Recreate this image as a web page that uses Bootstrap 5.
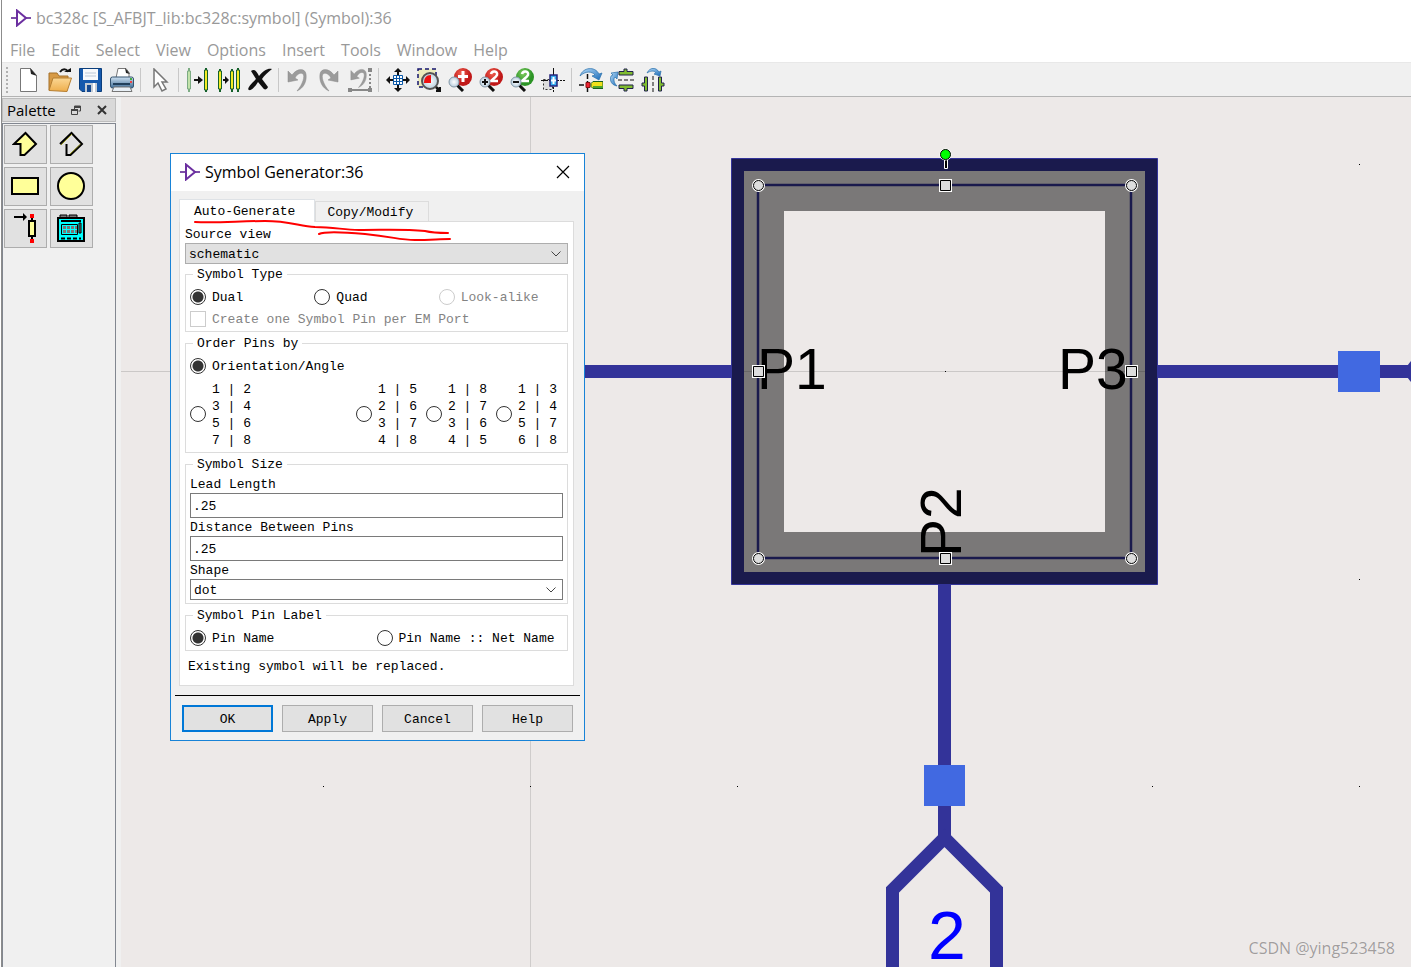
<!DOCTYPE html>
<html lang="en">
<head>
<meta charset="utf-8">
<meta name="viewport" content="width=device-width, initial-scale=1">
<title>bc328c [S_AFBJT_lib:bc328c:symbol] (Symbol):36</title>
<link href="https://cdn.jsdelivr.net/npm/bootstrap@5.3.0/dist/css/bootstrap.min.css" rel="stylesheet">
<style>
  :root { --face: #f0f0f0; --line: #dcdcdc; --button: #e1e1e1; --edge: #adadad; }
  body { font-family: "Open Sans", "Noto Sans", sans-serif; font-size: 15px; line-height: 20px; color: #000; background: #fff; }
  svg { display: block; }
  .app-window { margin-left: 1px; border-left: 1px solid #8c8c8c; }
  .app-title { height: 37px; padding: 0 0 2px 9px; gap: 5px; color: #999; }
  .app-title h1, .dialog-title h2 { font-size: 16px; line-height: 20px; font-weight: 400; margin: 0; }
  .app-menu { height: 26px; border-bottom: 1px solid #e8e8e8; font-size: 16px; }
  .app-menu .nav-link { padding: 2px 8px; color: #999; line-height: 22px; }
  .tool-strip { height: 34px; background: var(--face); border-bottom: 1px solid #b4b4b4; padding: 1px 0 0 4px; }
  .grip { width: 2px; height: 26px; margin-right: 5px; background: repeating-linear-gradient(#b0b0b0 0 2px, transparent 2px 4px); }
  .tool-btn { width: 31px; height: 30px; padding: 0; border: 0; display: flex; align-items: center; justify-content: center; border-radius: 0; }
  .tool-sep { width: 1px; height: 24px; background: #c8c8c8; margin: 0 3px; }
  .side-dock { width: 119px; background: var(--face); }
  .palette-pane { width: 114px; }
  .palette-head { height: 24px; margin: 1px 0; padding-left: 4px; background: #d9d9d9; border: 1px solid #bdbdbd; }
  .palette-head button { border: 0; background: none; padding: 0; }
  .palette-body { border: 1px solid #828790; border-bottom: 0; padding: 1px; }
  .palette-grid { display: grid; grid-template-columns: 43px 43px; gap: 3px; }
  .palette-btn { height: 39px; padding: 0 1px 1px 0; border: 1px solid var(--edge); border-radius: 0; background: var(--button); display: flex; align-items: center; justify-content: center; }
  .drawing { background: #ede9e8; min-width: 0; }
  .drawing text { font-family: "Liberation Sans", Arial, sans-serif; }
  .watermark { right: 16px; bottom: 8px; font-size: 16px; line-height: 22px; color: #a19d9d; text-shadow: 0 0 1px #fff; }

  .generator { left: 170px; top: 153px; width: 415px; background: var(--face); border: 1px solid #1883d7; font-family: "Liberation Mono", "Courier New", monospace; font-size: 13px; line-height: 16px; }
  .dialog-title { height: 37px; background: #fff; padding: 0 14px 2px 9px; gap: 5px; font-family: "Open Sans", "Noto Sans", sans-serif; }
  .dialog-title button { border: 0; background: none; padding: 0; }
  .tab-area { padding: 8px 10px 9px 8px; }
  .tab-area .nav-tabs { border: 0; height: 22px; align-items: flex-end; }
  .tab-area .nav-link { border: 1px solid var(--line); border-bottom: 0; border-radius: 0; padding: 2px 15px 0 11px; margin: 0; height: 20px; color: #000; background: var(--face); }
  .tab-area .nav-link.active { height: 23px; padding: 1px 19px 0 14px; background: #fff; position: relative; z-index: 1; margin-bottom: -1px; }
  .tab-sheet { background: #fff; border: 1px solid var(--line); padding: 3px 5px 10px; }
  .tab-sheet label { line-height: 16px; padding-top: 2px; }
  .tab-sheet fieldset { border: 1px solid var(--line); padding: 3px 4px 1px; margin-top: 3px; }
  .tab-sheet legend { float: none; width: auto; font-size: 13px; line-height: 16px; margin: 0 0 0 3px; padding: 1px 4px 0; }
  .source-select, .shape-select { width: 100%; height: 21px; appearance: none; border: 1px solid #7a7a7a; border-radius: 0; padding: 1px 3px 0; font-family: inherit; line-height: 17px; color: #000; display: block;
    background: #fff url("data:image/svg+xml,%3Csvg xmlns='http://www.w3.org/2000/svg' width='10' height='6'%3E%3Cpath d='M.5.5 5 5 9.500.5' fill='none' stroke='%23444'/%3E%3C/svg%3E") no-repeat right 6px center; }
  .source-select { background-color: var(--button); border-color: var(--edge); margin-bottom: 2px; }
  .choice-row { display: grid; grid-template-columns: 1fr 1fr 1fr; height: 22px; }
  .choice-row.pair { grid-template-columns: 1fr 1fr; }
  .choice { display: flex; align-items: center; gap: 6px; }
  .choice input { appearance: none; flex: none; width: 16px; height: 16px; margin: 0; border: 1px solid #333; background: #fff; }
  .choice input[type=radio] { border-radius: 50%; }
  .choice input:checked { background: radial-gradient(circle, #333 0 5px, #fff 6px); }
  .choice input:disabled { border-color: #ccc; }
  .choice input:disabled + label { color: #838383; }
  .pin-orders { display: grid; grid-template-columns: 1fr 70px 70px 67px; padding: 2px 0; }
  .pin-orders label { white-space: pre; line-height: 17px; }
  .tab-sheet .size-group { padding: 2px 4px 3px; }
  .size-group label { display: block; }
  .size-input { display: block; width: 100%; height: 25px; border: 1px solid #7a7a7a; padding: 2px 2px 0; color: #000; }
  .note { margin: 8px 3px 0; }
  .dialog-actions { margin: 0 4px; border-top: 1px solid #000; padding: 9px 7px 8px; display: grid; grid-template-columns: repeat(4, 1fr); gap: 9px; }
  .dialog-actions .btn { height: 27px; padding: 2px 0 0; font: inherit; color: #000; background: var(--button); border: 1px solid var(--edge); border-radius: 0; }
  .dialog-actions .btn.default { border: 2px solid #0078d7; }
  .red-pen { left: 20px; top: 60px; pointer-events: none; z-index: 2; }
</style>
</head>
<body class="vh-100 overflow-hidden">
<svg width="0" height="0" class="position-absolute" aria-hidden="true">
  <defs>
    <linearGradient id="blueShade" x1="0" y1="0" x2="1" y2="1"><stop offset="0" stop-color="#b8dcf8"/><stop offset="1" stop-color="#1669b8"/></linearGradient>
    <linearGradient id="folderShade" x1="0" y1="0" x2="0" y2="1"><stop offset="0" stop-color="#fbd794"/><stop offset="1" stop-color="#eeae4c"/></linearGradient>
    <linearGradient id="printShade" x1="0" y1="0" x2="0" y2="1"><stop offset="0" stop-color="#cfe2f2"/><stop offset="1" stop-color="#3e6c96"/></linearGradient>
    <radialGradient id="redBall" cx=".4" cy=".3"><stop offset="0" stop-color="#f06050"/><stop offset="1" stop-color="#c01818"/></radialGradient>
    <radialGradient id="greenBall" cx=".4" cy=".3"><stop offset="0" stop-color="#80cc60"/><stop offset="1" stop-color="#2c9426"/></radialGradient>
    <radialGradient id="lens"><stop offset="0" stop-color="#fff"/><stop offset="1" stop-color="#b8cede"/></radialGradient>
    <g id="logo"><path d="M0 9h6M14 9h6" stroke="#7d4fa8" stroke-width="2"/><path d="M6 1.500V16.500L15 9z" fill="#fff" stroke="#6b2fa0" stroke-width="2"/></g>
    <g id="undoShape"><path d="M1 3v11l10-2-3-2c2-4 6-6 8-4s0 10-6 17c7-3 10-10 9-17C18 0 10 0 5 7z" fill="#9b9b9b" stroke="#8b8b8b" stroke-width=".5"/></g>
    <g id="magnifier"><path d="M9 17l6 6" stroke="#111" stroke-width="3"/><circle cx="6" cy="14" r="5" fill="url(#lens)" stroke="#8599a8"/></g>
  </defs>
</svg>

<div class="app-window h-100 d-flex flex-column">
  <header class="app-title d-flex align-items-center">
    <svg width="20" height="18"><use href="#logo"/></svg>
    <h1>bc328c [S_AFBJT_lib:bc328c:symbol] (Symbol):36</h1>
  </header>
  <nav class="app-menu nav flex-nowrap" aria-label="Main menu">
    <a class="nav-link" href="#">File</a><a class="nav-link" href="#">Edit</a><a class="nav-link" href="#">Select</a><a class="nav-link" href="#">View</a><a class="nav-link" href="#">Options</a><a class="nav-link" href="#">Insert</a><a class="nav-link" href="#">Tools</a><a class="nav-link" href="#">Window</a><a class="nav-link" href="#">Help</a>
  </nav>

  <div class="tool-strip d-flex align-items-center flex-shrink-0" role="toolbar" aria-label="Tools">
    <span class="grip"></span>
    <button class="tool-btn btn" aria-label="New"><svg width="24" height="24"><path d="M3.500.5h10l6 7v16h-16z" fill="#fff" stroke="#777"/><path d="M13 0l7 8-6-2z" fill="#222"/></svg></button>
    <button class="tool-btn btn" aria-label="Open"><svg width="24" height="24"><path d="M1 22V5h8l2 3h9v3" fill="#d79a45" stroke="#a5712b"/><path d="M1 22.500 5 10h18.500L19 23.500z" fill="url(#folderShade)" stroke="#b57e31"/><path d="M12 4c3-4 7-3 8 0" fill="none" stroke="#111" stroke-width="2"/><path d="M16 4h7V0z" fill="#111"/></svg></button>
    <button class="tool-btn btn" aria-label="Save"><svg width="24" height="24"><path d="M.5.5h22v23H3L.500 21z" fill="#1559ad" stroke="#0b3e7c"/><path d="M4 1h15v11H4z" fill="#f7f9fc"/><path d="M6 5h11M6 8h11" stroke="#bbc8d8"/><path d="M6 15h12v9H6z" fill="#c3cbd4"/><path d="M8 17h4v7H8z" fill="#164a91"/><path d="M14 15h2v9h-2z" fill="#fff"/></svg></button>
    <button class="tool-btn btn" aria-label="Print"><svg width="24" height="24"><path d="M6 10 8 .5h8l3 4v6" fill="#fff" stroke="#777"/><path d="M15 0l5 6-4-1z" fill="#222"/><rect x=".5" y="9" width="23" height="11" rx="2" fill="url(#printShade)" stroke="#35536e"/><path d="M3 16h17" stroke="#213f5b" stroke-width="2"/><path d="M20 11h2" stroke="#4a4" stroke-width="2"/><path d="M20 14h2" stroke="#e44" stroke-width="2"/><path d="M4 19h16l2 4.500H2z" fill="#e8eff5" stroke="#777"/></svg></button>
    <span class="tool-sep"></span>
    <button class="tool-btn btn" aria-label="Pointer"><svg width="24" height="24"><path d="M6 1v18l4-4 4 8 4-2-4-7h5z" fill="#fff" stroke="#777" stroke-width="1.500"/></svg></button>
    <span class="tool-sep"></span>
    <button class="tool-btn btn" aria-label="Move"><svg width="24" height="24"><path d="M3 0v24" stroke="#7cab83" stroke-width="2"/><path d="M1.500 3h3v18h-3z" fill="#c2e2aa" stroke="#7cab83"/><path d="M20 0v24" stroke="#15612b" stroke-width="2"/><path d="M18.500 2h3v20h-3z" fill="#f4ec24" stroke="#15612b"/><path d="M8 12h5" stroke="#111" stroke-width="2"/><path d="M12 8v8l5-4z" fill="#111"/></svg></button>
    <button class="tool-btn btn" aria-label="Copy"><svg width="24" height="24"><path d="M3 1v23M15 1v23M21 0v24" stroke="#15612b" stroke-width="2"/><path d="M1.500 3h3v18h-3zM13.500 3h3v18h-3zM19.500 2h3v19h-3z" fill="#f4ec24" stroke="#15612b"/><path d="M6 12h3" stroke="#111" stroke-width="2"/><path d="M8 8v8l4-4z" fill="#111"/></svg></button>
    <button class="tool-btn btn" aria-label="Delete"><svg width="24" height="24"><path d="M3 3c3-2 5-1 8 5C16 2 20 0 24 1c-4 3-8 7-10 10l6 8c-1 3-4 3-5 1l-5-6c-3 5-7 9-9 8s0-4 7-11z" fill="#111"/></svg></button>
    <span class="tool-sep"></span>
    <button class="tool-btn btn" aria-label="Undo"><svg width="24" height="24"><use href="#undoShape" transform="translate(1 0)"/></svg></button>
    <button class="tool-btn btn" aria-label="Redo"><svg width="24" height="24"><use href="#undoShape" transform="translate(22 0) scale(-1 1)"/></svg></button>
    <button class="tool-btn btn" aria-label="Undo view"><svg width="24" height="24"><use href="#undoShape" transform="translate(2 0) scale(.85)"/><path d="M0 22h22" stroke="#888" stroke-width="2"/><path d="M22 2v20" stroke="#888" stroke-width="2" stroke-dasharray="2 2"/><path d="M0 20h4v4H0zM20 20h4v4h-4zM20 0h4v4h-4z" fill="#888"/></svg></button>
    <span class="tool-sep"></span>
    <button class="tool-btn btn" aria-label="View all"><svg width="24" height="24"><path d="M0 12l4-4v3h3v2H4v3zM24 12l-4-4v3h-3v2h3v3zM12 0 8 4h3v3h2V4h3zM12 24l-4-4h3v-3h2v3h3z" fill="#111"/><path d="M7.500 7.500h9v9h-9zM10.500 7v10M13.500 7v10M7 10.500h10M7 13.500h10" fill="#fff" stroke="#0a58a8"/></svg></button>
    <button class="tool-btn btn" aria-label="Zoom to area"><svg width="24" height="24"><path d="M1 1h18v18H1z" fill="#ececbd" stroke="#15156d" stroke-width="1.500" stroke-dasharray="4 3"/><path d="M18 18l5 5M23 19v4h-4" stroke="#111" stroke-width="2.500"/><circle cx="13" cy="13" r="8" fill="url(#lens)" stroke="#555" stroke-width="2"/><path d="M14 7v8H7c0-5 2-8 7-8z" fill="#e11"/></svg></button>
    <button class="tool-btn btn" aria-label="Zoom in"><svg width="24" height="24"><circle cx="15" cy="9" r="9" fill="url(#redBall)"/><path d="M15 3v11M10 8.500h10" stroke="#fff" stroke-width="3"/><use href="#magnifier"/></svg></button>
    <button class="tool-btn btn" aria-label="Zoom in by 2"><svg width="24" height="24"><circle cx="15" cy="9" r="9" fill="url(#redBall)"/><path d="M12 6c1-4 7-3 6 1-1 2-4 4-6 6h7" fill="none" stroke="#fff" stroke-width="2.500"/><use href="#magnifier"/><path d="M3 14h6M6 11v6" stroke="#111" stroke-width="2"/></svg></button>
    <button class="tool-btn btn" aria-label="Zoom out by 2"><svg width="24" height="24"><circle cx="15" cy="9" r="9" fill="url(#greenBall)"/><path d="M12 6c1-4 7-3 6 1-1 2-4 4-6 6h7" fill="none" stroke="#fff" stroke-width="2.500"/><use href="#magnifier"/><path d="M3 14h6" stroke="#111" stroke-width="2"/></svg></button>
    <button class="tool-btn btn" aria-label="Center"><svg width="24" height="24"><path d="M2.500 11.500h9v10h-9z" fill="#ddd" stroke="#333" stroke-dasharray="2 2"/><path d="M0 12.500h24M12.500 0v24" stroke="#111" stroke-dasharray="7 1 2 1"/><path d="M9 7h7v11H9z" fill="#39aef0" stroke="#25237a" stroke-width="1.500"/><path d="M12.500 9v7M10 12.500h5" stroke="#fff" stroke-width="2"/></svg></button>
    <span class="tool-sep"></span>
    <button class="tool-btn btn" aria-label="Rotate"><svg width="24" height="24"><path d="M1 8C4-1 16-2 20 6l3-1-3 7-7-4 3-1C13 3 6 3 1 8z" fill="url(#blueShade)" stroke="#2a70ab" stroke-width=".7"/><path d="M0 17h7M8.500 6v18" stroke="#111" stroke-width="1.500" stroke-dasharray="5 2"/><path d="M7 14.500h4v5H7z" fill="#e23" stroke="#811"/><path d="M14 13.500h10v7H14l-2-2v-3z" fill="#f0e01c" stroke="#175f22"/><path d="M14 19h10" stroke="#4ea52d" stroke-width="2"/></svg></button>
    <button class="tool-btn btn" aria-label="Mirror about x"><svg width="24" height="24"><path d="M7 18C-1 17-1 7 3 7L1 5l7-1-1 7-2-2c-2 2-1 6 2 9z" fill="url(#blueShade)" stroke="#2a70ab" stroke-width=".7"/><path d="M9 3.500h5V1h3v2.500h6v3.500H9zM9 17h14v3.500h-6V23h-3v-2.500H9z" fill="#80bd30" stroke="#20204c"/><path d="M8 12h16" stroke="#111" stroke-dasharray="4 2"/></svg></button>
    <button class="tool-btn btn" aria-label="Mirror about y"><svg width="24" height="24"><path d="M6 5c3-6 9-6 12-1l2-1-1 5-6-2 2-1c-2-3-6-2-9 0z" fill="url(#blueShade)" stroke="#2a70ab" stroke-width=".7"/><path d="M6.500 9v14H3.500v-5H1v-3h2.500V9zM17.500 9v14h3v-5H23v-3h-2.500V9z" fill="#80bd30" stroke="#20204c"/><path d="M12 8v16" stroke="#111" stroke-dasharray="4 2"/></svg></button>
  </div>

  <main class="d-flex flex-grow-1 overflow-hidden">
    <aside class="side-dock flex-shrink-0 d-flex">
      <div class="palette-pane d-flex flex-column">
        <div class="palette-head d-flex align-items-center">
          <span class="me-auto">Palette</span>
          <button aria-label="Float" class="me-3"><svg width="10" height="10"><path d="M3 2h7M0 5h7" stroke="#444" stroke-width="2"/><path d="M3.500 4V1h6v5h-2M.5 4.500h6v5h-6z" fill="none" stroke="#444"/></svg></button>
          <button aria-label="Close palette" class="me-2"><svg width="10" height="10"><path d="M1 1l8 8M9 1 1 9" stroke="#333" stroke-width="2"/></svg></button>
        </div>
        <div class="palette-body flex-grow-1">
          <div class="palette-grid">
            <button class="palette-btn" aria-label="Polygon"><svg width="26" height="26"><path d="M2 13 13.500 2 24 13 12.500 24H8.500V13z" fill="#ff9" stroke="#000" stroke-width="2"/></svg></button>
            <button class="palette-btn" aria-label="Polyline"><svg width="26" height="26"><path d="M2 13 13.500 2 24 13 12.500 24H8.500V13" fill="none" stroke="#000" stroke-width="2"/><path d="M3 14 14 3M22.500 13 12 23" stroke="#8c8c18" fill="none"/></svg></button>
            <button class="palette-btn" aria-label="Rectangle"><svg width="28" height="18"><path d="M1 1h26v16H1z" fill="#ff9" stroke="#000" stroke-width="2"/></svg></button>
            <button class="palette-btn" aria-label="Circle"><svg width="28" height="28"><circle cx="14" cy="14" r="13" fill="#ff9" stroke="#000" stroke-width="2"/></svg></button>
            <button class="palette-btn" aria-label="Pin"><svg width="24" height="30"><path d="M1 4h11M19 2v26" stroke="#000" stroke-width="2"/><path d="M10 0v8l4-4z"/><path d="M16 8h6v15h-6z" fill="#ff9" stroke="#000" stroke-width="2"/><path d="M17 1h4v4h-4zM17 26h4v4h-4z" fill="#f00"/></svg></button>
            <button class="palette-btn" aria-label="Instrument"><svg width="28" height="28"><path d="M3 1h7v3H3zM12 1h8v3h-8z" fill="#777" stroke="#000"/><path d="M1 4h26v23H1z" fill="#0ff" stroke="#000" stroke-width="2"/><path d="M4 7h20" stroke="#000" stroke-width="2"/><path d="M4.500 10.500h16v10h-16z" fill="none" stroke="#000"/><path d="M22 9h2v10h-2z" fill="#777" stroke="#000"/><path d="M6 13.500h14M6 17.500h14" stroke="#777" stroke-width="3" stroke-dasharray="3 1"/><path d="M4 24.500h20" stroke="#000" stroke-width="2" stroke-dasharray="4 2"/></svg></button>
          </div>
        </div>
      </div>
    </aside>

    <section class="drawing flex-grow-1 position-relative overflow-hidden" aria-label="Symbol drawing">
      <svg width="100%" height="100%" class="position-absolute">
        <g transform="translate(-121 -97)">
          <path d="M530.500 97v870" stroke="#cfcccb"/>
          <path d="M323 786h1v1h-1zM530 786h1v1h-1zM737 786h1v1h-1zM1152 786h1v1h-1zM1359 786h1v1h-1zM1359 579h1v1h-1zM1359 164h1v1h-1z"/>
          <path d="M500 371.500h240M1150 371.500h258M944.500 580v258" stroke="#339" stroke-width="13"/>
          <path d="M1407 366l4-5v21l-4-5z" fill="#339"/>
          <path d="M892.500 980v-90l52-52 52 52v90" fill="none" stroke="#339" stroke-width="13"/>
          <path d="M1338 351h42v41h-42zM924 765h41v41h-41z" fill="#4169e1"/>
          <path d="M731.500 158.500h426v426h-426z" fill="#1a1a4d" stroke="#339"/>
          <path d="M744 171h401v401H744z" fill="#7a7878"/>
          <path d="M784 211h321v321H784z" fill="#ede9e8"/>
          <path d="M758 185h373v373H758z" fill="none" stroke="#4c4b62" stroke-width="3"/>
          <path d="M758 185h373v373H758z" fill="none" stroke="#1a1a4d" stroke-width="2"/>
          <path d="M121 371.500h464M744 371.500h401" stroke="#000" stroke-opacity=".14"/>
          <path d="M945 371h1v1h-1z"/>
          <text x="757" y="389" font-size="57">P1</text>
          <text x="1058" y="389" font-size="57">P3</text>
          <text transform="translate(961 557) rotate(-90)" font-size="57">P2</text>
          <text x="928" y="959" font-size="68" fill="#00f">2</text>
          <g fill="#ddd" stroke="#fff" stroke-width="3">
            <path d="M940.500 180.500h10v10h-10zM940.500 553.500h10v10h-10zM753.500 366.500h10v10h-10zM1126.500 366.500h10v10h-10z"/>
            <circle cx="758.500" cy="185.500" r="5"/><circle cx="1131.500" cy="185.500" r="5"/><circle cx="758.500" cy="558.500" r="5"/><circle cx="1131.500" cy="558.500" r="5"/>
          </g>
          <g fill="#ddd" stroke="#000">
            <path d="M940.500 180.500h10v10h-10zM940.500 553.500h10v10h-10zM753.500 366.500h10v10h-10zM1126.500 366.500h10v10h-10z"/>
            <circle cx="758.500" cy="185.500" r="5"/><circle cx="1131.500" cy="185.500" r="5"/><circle cx="758.500" cy="558.500" r="5"/><circle cx="1131.500" cy="558.500" r="5"/>
          </g>
          <path d="M944.500 159v9.500h3V159" fill="#000" stroke="#fff"/>
          <circle cx="945.500" cy="154.500" r="6" fill="#fff"/><circle cx="945.500" cy="154.500" r="5" fill="#0f0" stroke="#000"/>
        </g>
      </svg>
      <span class="watermark position-absolute">CSDN @ying523458</span>
    </section>
  </main>
</div>

<div class="generator position-absolute" role="dialog" aria-labelledby="generatorTitle">
  <div class="dialog-title d-flex align-items-center">
    <svg width="20" height="18"><use href="#logo"/></svg>
    <h2 id="generatorTitle" class="me-auto">Symbol Generator:36</h2>
    <button aria-label="Close"><svg width="14" height="14"><path d="M1 1l12 12M13 1 1 13" stroke="#000" stroke-width="1.200"/></svg></button>
  </div>
  <svg class="red-pen position-absolute" width="264" height="30" fill="none" stroke="#f00" stroke-width="2" stroke-linecap="round"><path d="M4 8C28 9 48 7 74 7c24 0 34 5 50 6 20 0 28 3 44 3 28 0 44-1 66 1 8 2 16 2 23 2"/><path d="M128 20c6-3 24-2 46 0 30 3 34 6 50 6s24-1 35-1"/></svg>
  <div class="tab-area">
    <div class="nav nav-tabs" role="tablist">
      <button class="nav-link active" role="tab" aria-selected="true">Auto-Generate</button>
      <button class="nav-link" role="tab" aria-selected="false">Copy/Modify</button>
    </div>
    <form class="tab-sheet" id="generatorForm">
      <label class="d-block" for="source">Source view</label>
      <select id="source" class="source-select"><option>schematic</option></select>
      <fieldset class="mt-0">
        <legend>Symbol Type</legend>
        <div class="choice-row">
          <div class="choice"><input type="radio" name="kind" id="dual" checked><label for="dual">Dual</label></div>
          <div class="choice"><input type="radio" name="kind" id="quad"><label for="quad">Quad</label></div>
          <div class="choice"><input type="radio" name="kind" id="look" disabled><label for="look">Look-alike</label></div>
        </div>
        <div class="choice choice-row d-flex"><input type="checkbox" id="emport" disabled><label for="emport">Create one Symbol Pin per EM Port</label></div>
      </fieldset>
      <fieldset>
        <legend>Order Pins by</legend>
        <div class="choice choice-row d-flex"><input type="radio" name="order" id="angle" checked><label for="angle">Orientation/Angle</label></div>
        <div class="pin-orders">
          <div class="choice"><input type="radio" name="order" id="orderA"><label for="orderA">1 | 2
3 | 4
5 | 6
7 | 8</label></div>
          <div class="choice"><input type="radio" name="order" id="orderB"><label for="orderB">1 | 5
2 | 6
3 | 7
4 | 8</label></div>
          <div class="choice"><input type="radio" name="order" id="orderC"><label for="orderC">1 | 8
2 | 7
3 | 6
4 | 5</label></div>
          <div class="choice"><input type="radio" name="order" id="orderD"><label for="orderD">1 | 3
2 | 4
5 | 7
6 | 8</label></div>
        </div>
      </fieldset>
      <fieldset class="size-group">
        <legend>Symbol Size</legend>
        <label for="lead">Lead Length</label>
        <input class="size-input" id="lead" type="text" value=".25">
        <label for="distance">Distance Between Pins</label>
        <input class="size-input" id="distance" type="text" value=".25">
        <label for="shape">Shape</label>
        <select id="shape" class="shape-select"><option>dot</option></select>
      </fieldset>
      <fieldset>
        <legend>Symbol Pin Label</legend>
        <div class="choice-row pair">
          <div class="choice"><input type="radio" name="pinlabel" id="pinName" checked><label for="pinName">Pin Name</label></div>
          <div class="choice"><input type="radio" name="pinlabel" id="netName"><label for="netName">Pin Name :: Net Name</label></div>
        </div>
      </fieldset>
      <p class="note">Existing symbol will be replaced.</p>
    </form>
  </div>
  <div class="dialog-actions">
    <button class="btn default" type="button">OK</button>
    <button class="btn" type="button">Apply</button>
    <button class="btn" type="button">Cancel</button>
    <button class="btn" type="button">Help</button>
  </div>
</div>
<script src="https://cdn.jsdelivr.net/npm/bootstrap@5.3.0/dist/js/bootstrap.bundle.min.js"></script>
</body>
</html>
